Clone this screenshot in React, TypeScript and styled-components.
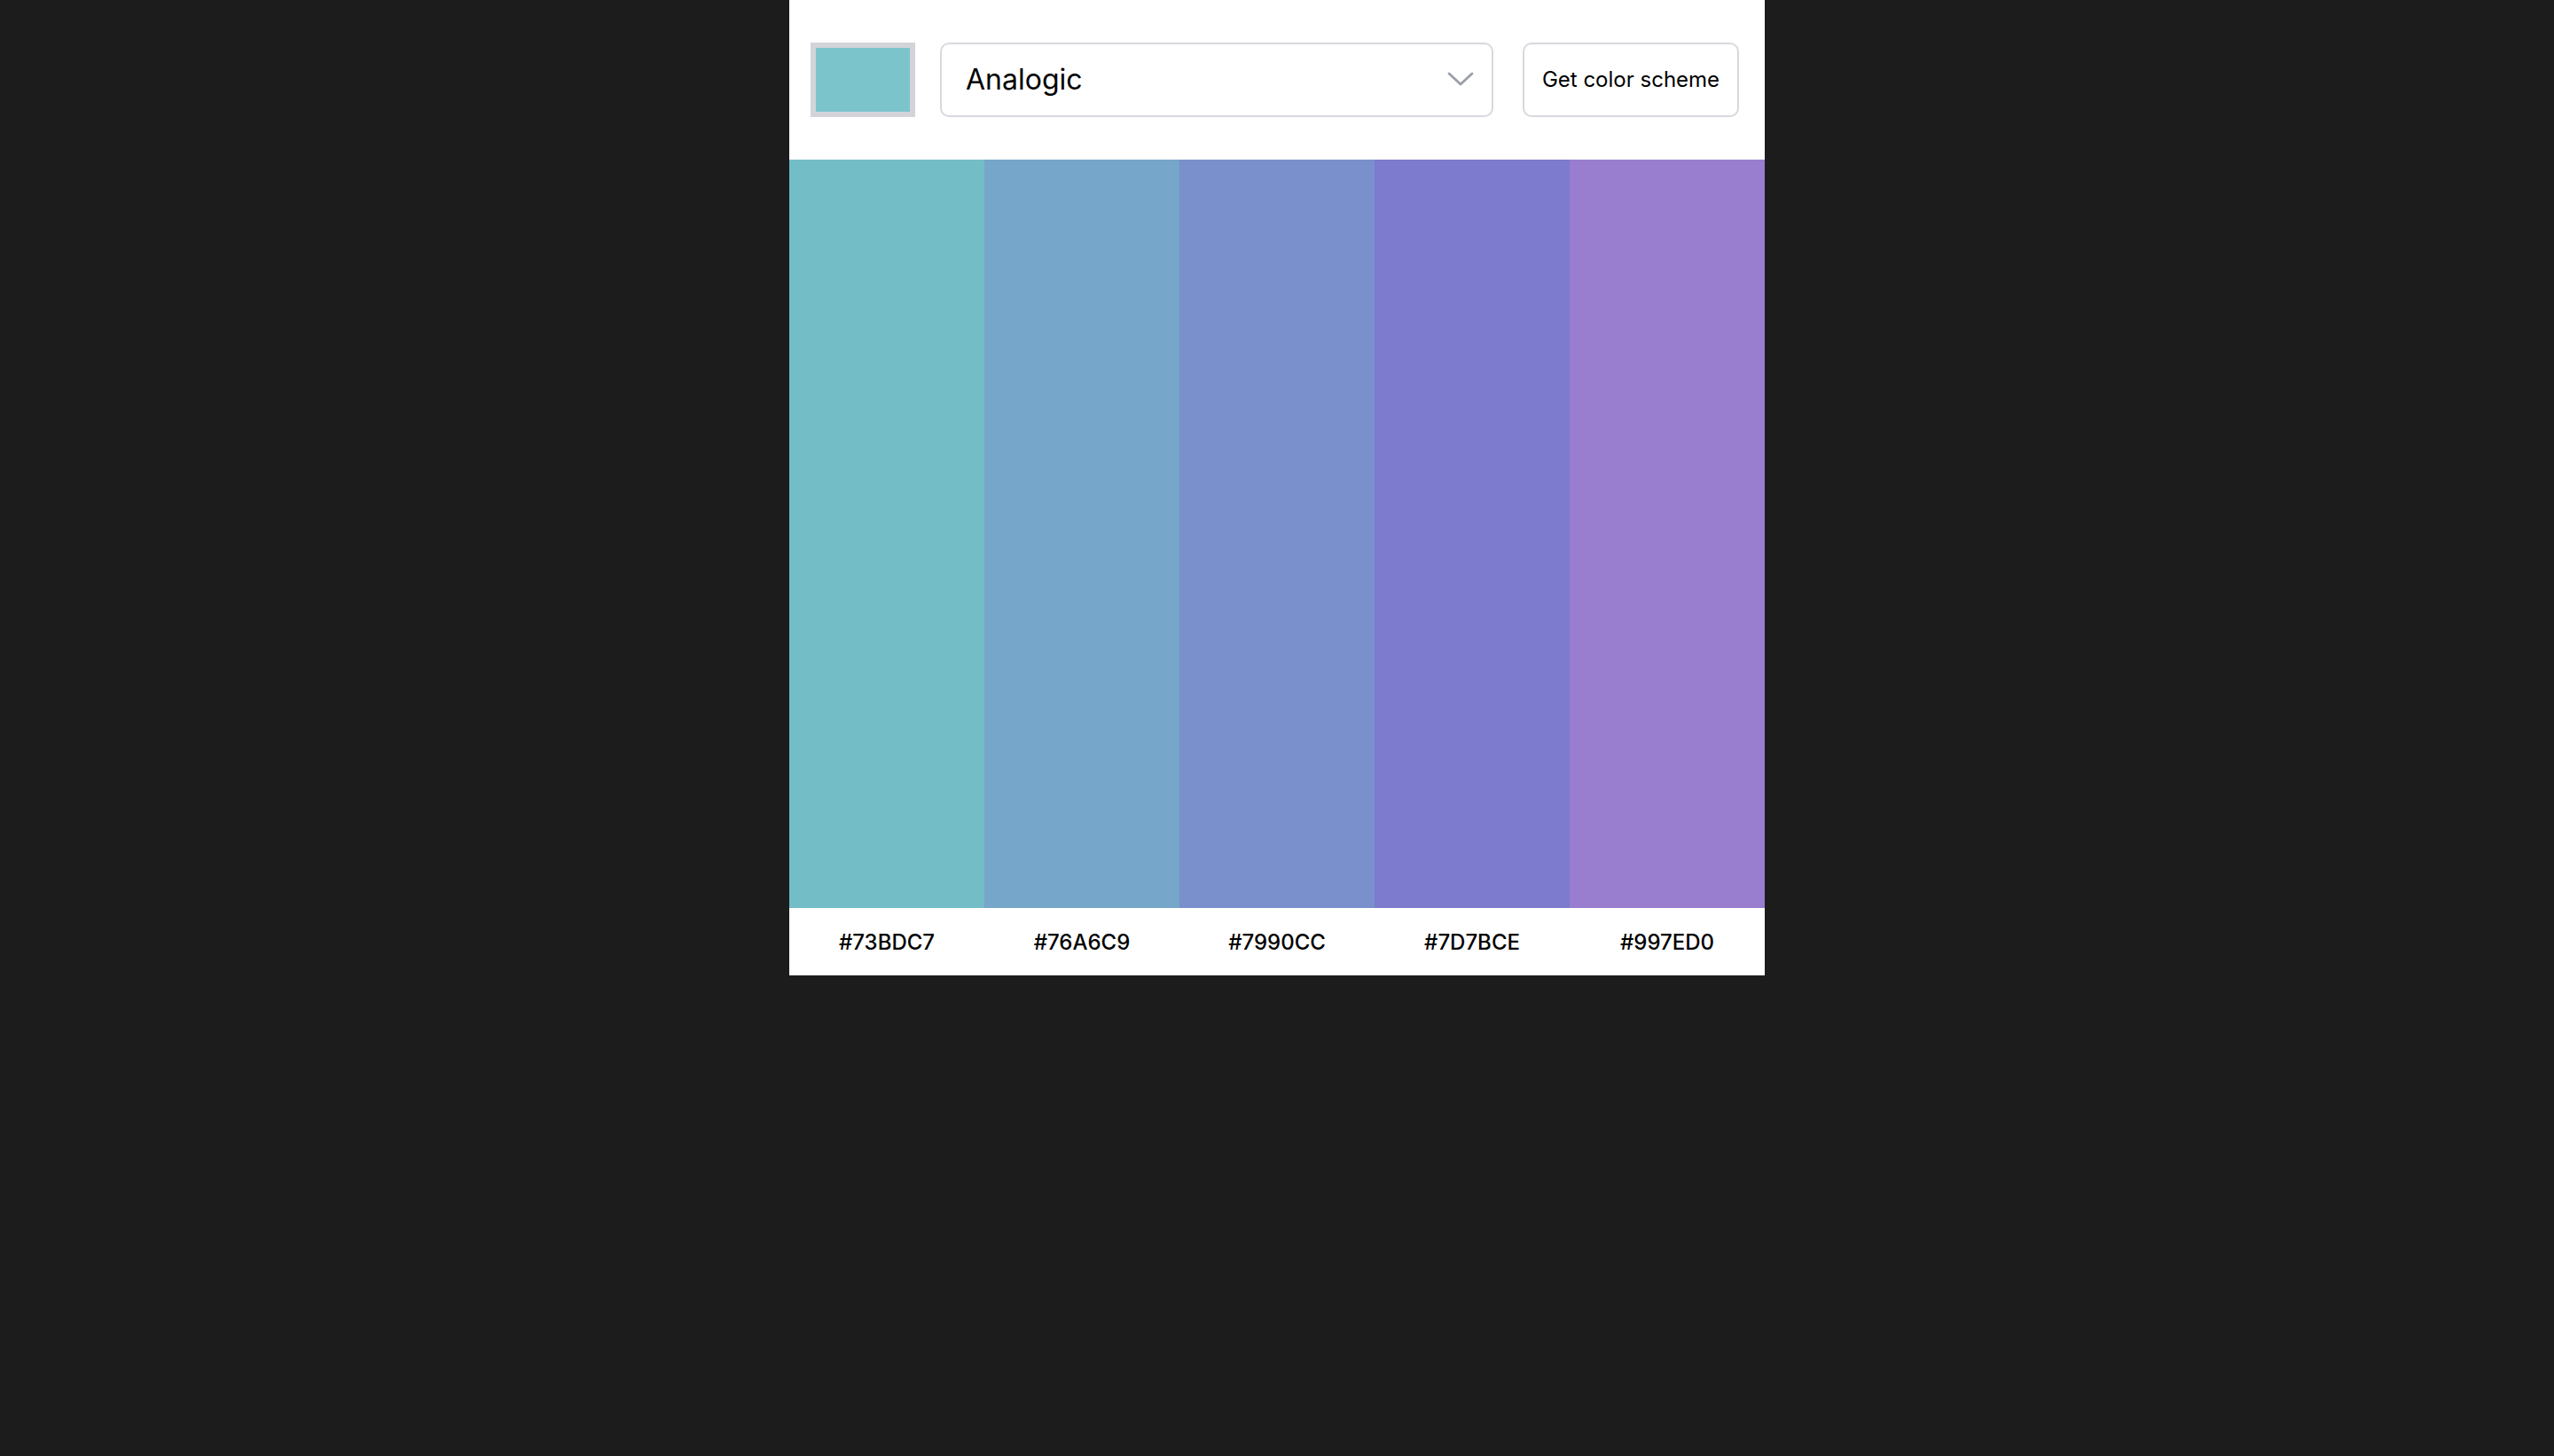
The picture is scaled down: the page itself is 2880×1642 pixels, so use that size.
import React from "react";
import styled, { createGlobalStyle } from "styled-components";

const GlobalStyle = createGlobalStyle`
  html, body {
    margin: 0;
    padding: 0;
    background: #1c1c1c;
    font-family: Inter, "Liberation Sans", Arial, sans-serif;
  }
  * { box-sizing: border-box; }
`;

const Page = styled.div`
  display: flex;
  justify-content: center;
  min-height: 1642px;
  background: #1c1c1c;
`;

const Card = styled.main`
  width: 1100px;
  height: 1100px;
  background: #ffffff;
  display: flex;
  flex-direction: column;
`;

const Toolbar = styled.header`
  height: 180px;
  display: flex;
  align-items: center;
  gap: 28px;
  padding: 0 29px 0 24px;
`;

const SwatchPicker = styled.div<{ $color: string }>`
  width: 118px;
  height: 84px;
  flex: none;
  border: 6px solid #d3d4d9;
  background: ${(p) => p.$color};
`;

const Select = styled.div`
  flex: 1;
  height: 84px;
  border: 2px solid #d7d9de;
  border-radius: 10px;
  display: flex;
  align-items: center;
  justify-content: space-between;
  padding: 0 20px 2px 27px;
  font-size: 32px;
  color: #000;
`;

const Chevron = styled.svg`
  width: 30px;
  height: 16px;
  flex: none;
`;

const Button = styled.button`
  margin-left: 5px;
  width: 244px;
  height: 84px;
  flex: none;
  background: #fff;
  border: 2px solid #d7d9de;
  border-radius: 10px;
  font-family: Inter, "Liberation Sans", Arial, sans-serif;
  font-size: 24px;
  color: #000;
  padding: 0 0 2px;
  cursor: pointer;
`;

const Palette = styled.section`
  flex: 1;
  display: grid;
  grid-template-columns: repeat(5, 1fr);
  grid-template-rows: 1fr 76px;
`;

const Band = styled.div<{ $color: string }>`
  background: ${(p) => p.$color};
`;

const HexLabel = styled.div`
  display: flex;
  align-items: center;
  justify-content: center;
  font-size: 24px;
  font-weight: 500;
  color: #000;
`;

const colors = ["#73BDC7", "#76A6C9", "#7990CC", "#7D7BCE", "#997ED0"];

export default function App() {
  return (
    <>
      <GlobalStyle />
      <Page>
        <Card>
          <Toolbar>
            <SwatchPicker $color="#7BC4CC" />
            <Select>
              <span>Analogic</span>
              <Chevron viewBox="0 0 30 16" fill="none">
                <path
                  d="M2 2 L15 14 L28 2"
                  stroke="#9a9ea8"
                  strokeWidth="2.8"
                  strokeLinecap="round"
                  strokeLinejoin="round"
                />
              </Chevron>
            </Select>
            <Button>Get color scheme</Button>
          </Toolbar>
          <Palette>
            {colors.map((c) => (
              <Band key={c} $color={c} />
            ))}
            {colors.map((c) => (
              <HexLabel key={c + "-l"}>{c}</HexLabel>
            ))}
          </Palette>
        </Card>
      </Page>
    </>
  );
}
